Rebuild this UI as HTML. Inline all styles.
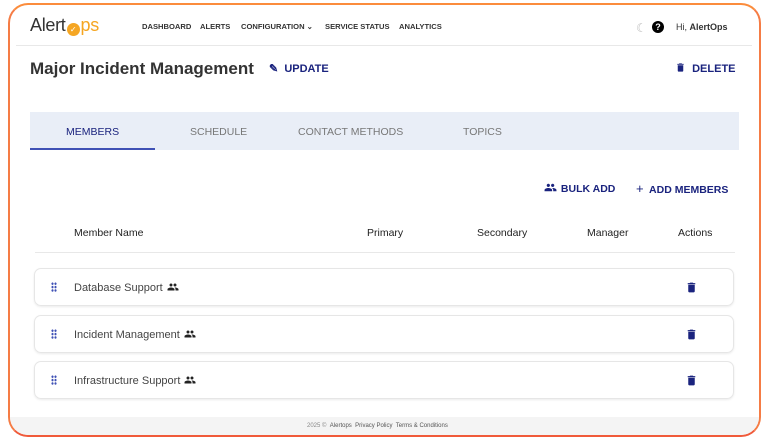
<!DOCTYPE html>
<html><head><meta charset="utf-8"><style>
*{box-sizing:border-box;margin:0;padding:0}
body{width:768px;height:440px;background:#fff;font-family:"Liberation Sans",sans-serif;position:relative;overflow:hidden;color:#333}
.frame{position:absolute;left:8px;top:3px;width:753px;height:434px;border:2px solid #f57c45;border-radius:20px;overflow:hidden;background:#fff;border-top-color:#fb8c3c;border-bottom-color:#f05a3a}
.a{position:absolute;white-space:nowrap}
.nav{font-size:7.6px;font-weight:bold;color:#333;top:17px}
.blue{color:#1a237e;font-weight:bold}
.tab{font-size:10.5px;top:121px;color:#777}
.th{font-size:10.5px;top:222px;color:#222}
.card{position:absolute;left:24px;width:700px;height:38px;border:1px solid #e6e6e6;border-radius:7px;box-shadow:0 1px 2px rgba(0,0,0,.08)}
.card .n{position:absolute;left:39px;top:12px;font-size:11px;color:#444}
.dots{position:absolute;left:16px;top:13px;width:6px;height:10px;background:radial-gradient(circle,#3f51b5 1px,transparent 1.3px) 0 0/3px 3.4px}
.tr{position:absolute;left:650px;top:12px}
</style></head><body>
<svg width="0" height="0" style="position:absolute"><defs>
<symbol id="ppl" viewBox="0 0 24 24"><path d="M16 11c1.7 0 3-1.3 3-3s-1.3-3-3-3-3 1.3-3 3 1.3 3 3 3zm-8 0c1.7 0 3-1.3 3-3S9.7 5 8 5 5 6.3 5 8s1.3 3 3 3zm0 2c-2.3 0-7 1.2-7 3.5V19h14v-2.5C15 14.2 10.3 13 8 13zm8 0c-.3 0-.6 0-1 .1 1.2.8 2 2 2 3.4V19h6v-2.5c0-2.3-4.7-3.5-7-3.5z"/></symbol>
<symbol id="trash" viewBox="0 0 24 24"><path fill="#1a237e" d="M6 19c0 1.1.9 2 2 2h8c1.1 0 2-.9 2-2V7H6v12zM19 4h-3.5l-1-1h-5l-1 1H5v2h14V4z"/></symbol>
</defs></svg>
<div class="frame">
<div class="a" style="left:20px;top:10px;font-size:18px;color:#333;letter-spacing:-.3px">Alert<span style="display:inline-block;width:13px;height:13px;background:#f5a623;border-radius:50%;vertical-align:-1px;margin:0 1px;color:#fff;font-size:8px;text-align:center;line-height:13px">✓</span><span style="color:#f5a623">ps</span></div>
<div class="a nav" style="left:132px">DASHBOARD</div>
<div class="a nav" style="left:190px">ALERTS</div>
<div class="a nav" style="left:231px">CONFIGURATION ⌄</div>
<div class="a nav" style="left:315px">SERVICE STATUS</div>
<div class="a nav" style="left:389px">ANALYTICS</div>
<div class="a" style="left:626px;top:16px;font-size:12px;color:#bbb">☾</div>
<div class="a" style="left:642px;top:16px;width:12px;height:12px;border-radius:50%;background:#000;color:#fff;font-size:9px;font-weight:bold;text-align:center;line-height:12px">?</div>
<div class="a" style="left:666px;top:17px;font-size:9px;color:#333">Hi, <b>AlertOps</b></div>
<div class="a" style="left:6px;top:40px;width:736px;height:1px;background:#e8e8e8"></div>
<div class="a" style="left:20px;top:54px;font-size:17px;font-weight:bold;color:#333">Major Incident Management</div>
<div class="a blue" style="left:259px;top:57px;font-size:11px">✎ &nbsp;UPDATE</div>
<div class="a blue" style="left:665px;top:57px;font-size:11px"><svg width="11" height="11" style="vertical-align:-1px"><use href="#trash"/></svg> &nbsp;DELETE</div>
<div class="a" style="left:20px;top:107px;width:709px;height:38px;background:#e9eef7"></div>
<div class="a" style="left:20px;top:143px;width:125px;height:2px;background:#3f51b5"></div>
<div class="a tab" style="left:56px;color:#1a237e">MEMBERS</div>
<div class="a tab" style="left:180px">SCHEDULE</div>
<div class="a tab" style="left:288px">CONTACT METHODS</div>
<div class="a tab" style="left:453px">TOPICS</div>
<div class="a blue" style="left:533px;top:176px;font-size:10.5px"><svg width="15" height="13" style="vertical-align:-2px;fill:#1a237e"><use href="#ppl"/></svg> BULK ADD</div>
<div class="a blue" style="left:626px;top:176px;font-size:10.5px"><span style="font-weight:normal;font-size:13px">+</span>&nbsp; ADD MEMBERS</div>
<div class="a th" style="left:64px">Member Name</div>
<div class="a th" style="left:357px">Primary</div>
<div class="a th" style="left:467px">Secondary</div>
<div class="a th" style="left:577px">Manager</div>
<div class="a th" style="left:668px">Actions</div>
<div class="a" style="left:25px;top:247px;width:700px;height:1px;background:#e8e8e8"></div>
<div class="card" style="top:263px"><div class="dots"></div><div class="n">Database Support <svg width="14" height="12" style="vertical-align:-2px;fill:#222"><use href="#ppl"/></svg></div><svg class="tr" width="13" height="13"><use href="#trash"/></svg></div>
<div class="card" style="top:310px"><div class="dots"></div><div class="n">Incident Management <svg width="14" height="12" style="vertical-align:-2px;fill:#222"><use href="#ppl"/></svg></div><svg class="tr" width="13" height="13"><use href="#trash"/></svg></div>
<div class="card" style="top:356px"><div class="dots"></div><div class="n">Infrastructure Support <svg width="14" height="12" style="vertical-align:-2px;fill:#222"><use href="#ppl"/></svg></div><svg class="tr" width="13" height="13"><use href="#trash"/></svg></div>
<div class="a" style="left:0;top:412px;width:753px;height:20px;background:#f4f4f4"></div>
<div class="a" style="left:297px;top:418px;font-size:6px;color:#888">2025 © &nbsp;<span style="color:#555">Alertops &nbsp;Privacy Policy &nbsp;Terms &amp; Conditions</span></div>
</div>
</body></html>
